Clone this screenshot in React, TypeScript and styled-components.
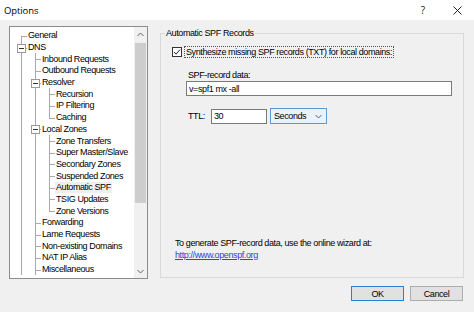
import React from 'react';
import styled, { createGlobalStyle } from 'styled-components';

const GlobalStyle = createGlobalStyle`
  html, body { margin: 0; padding: 0; }
  body {
    background: #f0f0f0;
    font-family: "Liberation Sans", Arial, sans-serif;
    font-size: 9px;
    letter-spacing: -0.4px;
    color: #000;
  }
`;

const Dialog = styled.div`
  width: 474px;
  height: 312px;
  display: flex;
  flex-direction: column;
  background: #f0f0f0;
  overflow: hidden;
`;

const TitleBar = styled.div`
  height: 20px;
  background: #fff;
  display: flex;
  align-items: center;
  padding-left: 4px;
`;

const Title = styled.div`
  flex: 1;
  font-family: "Open Sans", "Liberation Sans", sans-serif;
  font-size: 9.5px;
  letter-spacing: -0.1px;
`;

const TitleButton = styled.div<{ $w: number }>`
  width: ${(p) => p.$w}px;
  height: 20px;
  display: flex;
  align-items: center;
  justify-content: center;
  font-family: "Open Sans", sans-serif;
  font-size: 10px;
  letter-spacing: 0;
  color: #222;
`;

const Content = styled.div`
  display: flex;
  gap: 12px;
  padding: 6px 10px 0 9px;
  height: 253px;
`;

const TreeBox = styled.div`
  width: 139px;
  height: 253px;
  box-sizing: border-box;
  border: 1px solid #8c8c8c;
  background: #fff;
  display: flex;
  overflow: hidden;
`;

const TreeList = styled.div`
  flex: 1;
  padding: 3px 0 0 5px;
`;

const Row = styled.div`
  display: flex;
  align-items: center;
  height: 11.7px;
  white-space: nowrap;
`;

const Guide = styled.div<{ $kind: 'pass' | 'mid' | 'last' | 'first' }>`
  position: relative;
  width: 14px;
  height: 100%;
  flex: none;
  &::before {
    content: '';
    position: absolute;
    left: 6px;
    width: 1px;
    background: #a9a9a9;
    top: ${(p) => (p.$kind === 'first' ? '50%' : '0')};
    bottom: ${(p) => (p.$kind === 'last' ? '50%' : '0')};
  }
  &::after {
    content: '';
    display: ${(p) => (p.$kind === 'pass' ? 'none' : 'block')};
    position: absolute;
    left: 6px;
    right: 2px;
    top: 50%;
    height: 1px;
    background: #a9a9a9;
  }
`;

const ExpandBox = styled.span`
  position: absolute;
  left: 2px;
  top: 50%;
  margin-top: -4px;
  width: 7px;
  height: 7px;
  border: 1px solid #9a9a9a;
  background: #fff;
  z-index: 1;
  &::after {
    content: '';
    position: absolute;
    left: 1px;
    right: 1px;
    top: 3px;
    height: 1px;
    background: #333;
  }
`;

const Label = styled.span<{ $selected?: boolean }>`
  margin-left: -2px;
  padding: 0 1px;
  line-height: 11px;
  background: ${(p) => (p.$selected ? '#efefef' : 'transparent')};
`;

const ScrollBar = styled.div`
  width: 13px;
  flex: none;
  background: #f0f0f0;
  display: flex;
  flex-direction: column;
`;

const ScrollArrow = styled.div`
  height: 14px;
  display: flex;
  align-items: center;
  justify-content: center;
`;

const ScrollTrack = styled.div`
  flex: 1;
  display: flex;
  flex-direction: column;
  padding: 2px 1px 0;
`;

const ScrollThumb = styled.div`
  height: 160px;
  background: #cdcdcd;
`;

const GroupBox = styled.fieldset`
  margin: 2px 0 0;
  padding: 0 10px 0 11px;
  width: 304px;
  height: 250px;
  box-sizing: border-box;
  border: 1px solid #d9d9d9;
  min-width: 0;
  display: flex;
  flex-direction: column;
`;

const Legend = styled.legend`
  padding: 0 1px;
  margin-left: -7px;
  line-height: 11px;
`;

const CheckRow = styled.label`
  display: flex;
  align-items: center;
  gap: 2px;
  margin-top: 7px;
`;

const CheckText = styled.span`
  border: 1px dotted #555;
  padding: 0 1px;
  line-height: 10px;
`;

const Indented = styled.div`
  padding-left: 14px;
  display: flex;
  flex-direction: column;
`;

const FieldLabel = styled.div`
  margin-top: 12px;
  padding-left: 2px;
  line-height: 11px;
`;

const TextBox = styled.div<{ $w?: number }>`
  box-sizing: border-box;
  height: 15px;
  width: ${(p) => (p.$w ? `${p.$w}px` : '266px')};
  border: 1px solid #7a7a7a;
  background: #fff;
  padding-left: 2px;
  display: flex;
  align-items: center;
`;

const TtlRow = styled.div`
  display: flex;
  align-items: center;
  gap: 3px;
  margin-top: 12px;
  padding-left: 2px;
`;

const TtlLabel = styled.span`
  width: 20px;
`;

const Combo = styled.div`
  box-sizing: border-box;
  width: 57px;
  height: 16px;
  border: 1px solid #5b9bd5;
  background: #eaf3fc;
  display: flex;
  align-items: center;
  justify-content: space-between;
  padding: 0 4px 0 3px;
`;

const Note = styled.div`
  margin-top: auto;
  padding-left: 3px;
  margin-bottom: 16px;
  line-height: 12px;
`;

const Link = styled.a`
  color: #2a48d0;
  text-decoration: underline;
`;

const Footer = styled.div`
  display: flex;
  justify-content: flex-end;
  gap: 6px;
  padding: 7px 11px 0 0;
`;

const Button = styled.div<{ $default?: boolean }>`
  box-sizing: border-box;
  width: 53px;
  height: 15px;
  background: #e1e1e1;
  border: 1px solid ${(p) => (p.$default ? '#2f7fd0' : '#adadad')};
  display: flex;
  align-items: center;
  justify-content: center;
`;

type Item = { label: string; depth: number; kind: 'first' | 'mid' | 'last'; box?: boolean; selected?: boolean };

const items: Item[] = [
  { label: 'General', depth: 0, kind: 'first' },
  { label: 'DNS', depth: 0, kind: 'mid', box: true },
  { label: 'Inbound Requests', depth: 1, kind: 'mid' },
  { label: 'Outbound Requests', depth: 1, kind: 'mid' },
  { label: 'Resolver', depth: 1, kind: 'mid', box: true },
  { label: 'Recursion', depth: 2, kind: 'mid' },
  { label: 'IP Filtering', depth: 2, kind: 'mid' },
  { label: 'Caching', depth: 2, kind: 'last' },
  { label: 'Local Zones', depth: 1, kind: 'mid', box: true },
  { label: 'Zone Transfers', depth: 2, kind: 'mid' },
  { label: 'Super Master/Slave', depth: 2, kind: 'mid' },
  { label: 'Secondary Zones', depth: 2, kind: 'mid' },
  { label: 'Suspended Zones', depth: 2, kind: 'mid' },
  { label: 'Automatic SPF', depth: 2, kind: 'mid', selected: true },
  { label: 'TSIG Updates', depth: 2, kind: 'mid' },
  { label: 'Zone Versions', depth: 2, kind: 'last' },
  { label: 'Forwarding', depth: 1, kind: 'mid' },
  { label: 'Lame Requests', depth: 1, kind: 'mid' },
  { label: 'Non-existing Domains', depth: 1, kind: 'mid' },
  { label: 'NAT IP Alias', depth: 1, kind: 'mid' },
  { label: 'Miscellaneous', depth: 1, kind: 'mid' },
];

function Chevron({ up }: { up?: boolean }) {
  return (
    <svg width="7" height="5" viewBox="0 0 7 5">
      <path d={up ? 'M0.5 4L3.5 1L6.5 4' : 'M0.5 1L3.5 4L6.5 1'} fill="none" stroke="#606060" strokeWidth="1" />
    </svg>
  );
}

function TreeRow({ item }: { item: Item }) {
  const guides = [];
  for (let i = 0; i < item.depth; i++) guides.push(<Guide key={i} $kind="pass" />);
  return (
    <Row>
      {guides}
      <Guide $kind={item.kind}>{item.box && <ExpandBox />}</Guide>
      <Label $selected={item.selected}>{item.label}</Label>
    </Row>
  );
}

export default function App() {
  return (
    <>
      <GlobalStyle />
      <Dialog>
        <TitleBar>
          <Title>Options</Title>
          <TitleButton $w={34}>?</TitleButton>
          <TitleButton $w={34}>
            <svg width="9" height="9" viewBox="0 0 9 9">
              <path d="M0.5 0.5L8.5 8.5M8.5 0.5L0.5 8.5" stroke="#222" strokeWidth="1" />
            </svg>
          </TitleButton>
        </TitleBar>
        <Content>
          <TreeBox>
            <TreeList>
              {items.map((it) => (
                <TreeRow key={it.label} item={it} />
              ))}
            </TreeList>
            <ScrollBar>
              <ScrollArrow>
                <Chevron up />
              </ScrollArrow>
              <ScrollTrack>
                <ScrollThumb />
              </ScrollTrack>
              <ScrollArrow>
                <Chevron />
              </ScrollArrow>
            </ScrollBar>
          </TreeBox>
          <GroupBox>
            <Legend>Automatic SPF Records</Legend>
            <CheckRow>
              <svg width="10" height="10" viewBox="0 0 10 10">
                <rect x="0.5" y="0.5" width="9" height="9" fill="#fff" stroke="#333" />
                <path d="M2 5L4 7.2L8 2.6" fill="none" stroke="#222" strokeWidth="1" />
              </svg>
              <CheckText>Synthesize missing SPF records (TXT) for local domains:</CheckText>
            </CheckRow>
            <Indented>
              <FieldLabel>SPF-record data:</FieldLabel>
              <TextBox>v=spf1 mx -all</TextBox>
              <TtlRow>
                <TtlLabel>TTL:</TtlLabel>
                <TextBox $w={56}>30</TextBox>
                <Combo>
                  <span>Seconds</span>
                  <Chevron />
                </Combo>
              </TtlRow>
            </Indented>
            <Note>
              <div>To generate SPF-record data, use the online wizard at:</div>
              <Link href="#">http://www.openspf.org</Link>
            </Note>
          </GroupBox>
        </Content>
        <Footer>
          <Button $default>OK</Button>
          <Button>Cancel</Button>
        </Footer>
      </Dialog>
    </>
  );
}
